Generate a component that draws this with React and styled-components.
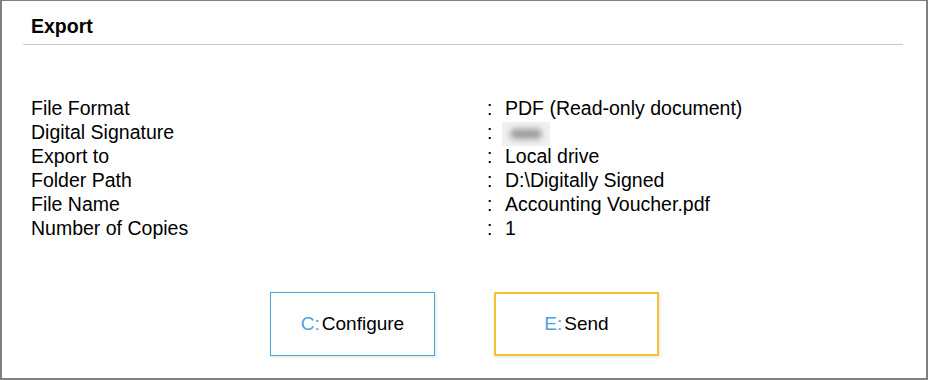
import React from "react";
import styled, { createGlobalStyle } from "styled-components";

const Global = createGlobalStyle`
  html, body {
    margin: 0;
    padding: 0;
    background: #ffffff;
  }
  * {
    box-sizing: border-box;
  }
`;

const Panel = styled.div`
  width: 928px;
  height: 380px;
  background: #ffffff;
  border: 2px solid #808080;
  border-top-width: 1px;
  font-family: "Liberation Sans", Arial, sans-serif;
  color: #000;
  display: flex;
  flex-direction: column;
`;

const Header = styled.div`
  margin: 0 23px 0 21px;
  height: 44px;
  padding: 14px 0 0 8px;
  border-bottom: 1px solid #c8c8c8;
  font-size: 19.5px;
  font-weight: bold;
`;

const Fields = styled.div`
  padding: 51px 0 0 29px;
  display: flex;
  flex-direction: column;
`;

const Row = styled.div`
  display: grid;
  grid-template-columns: 456px 18px 1fr;
  height: 24px;
  line-height: 24px;
  font-size: 19.5px;
`;

const Colon = styled.span``;

const Blurred = styled.span`
  display: inline-block;
  vertical-align: middle;
  width: 48px;
  height: 24px;
  margin-left: -3px;
  background: #f1f1f1;
  position: relative;
  &::after {
    content: "";
    position: absolute;
    left: 8px;
    top: 7px;
    width: 32px;
    height: 10px;
    border-radius: 5px;
    background: #999999;
    filter: blur(3px);
  }
`;

const Actions = styled.div`
  display: flex;
  gap: 59px;
  padding: 52px 0 0 268px;
`;

const Button = styled.div`
  width: 165px;
  height: 64px;
  display: flex;
  align-items: center;
  justify-content: center;
  border: ${(p) => (p.$primary ? "2px solid #f6c033" : "1px solid #4aa3df")};
  box-shadow: 1px 1px 3px rgba(0, 0, 0, 0.12);
  font-size: 19px;
  background: #fff;
  > span {
    color: #4aa3df;
    margin-right: 2px;
  }
`;

const rows = [
  ["File Format", "PDF (Read-only document)"],
  ["Digital Signature", null],
  ["Export to", "Local drive"],
  ["Folder Path", "D:\\Digitally Signed"],
  ["File Name", "Accounting Voucher.pdf"],
  ["Number of Copies", "1"],
];

export default function App() {
  return (
    <>
      <Global />
      <Panel>
        <Header>Export</Header>
        <Fields>
          {rows.map(([label, value]) => (
            <Row key={label}>
              <span>{label}</span>
              <Colon>:</Colon>
              <span>{value === null ? <Blurred /> : value}</span>
            </Row>
          ))}
        </Fields>
        <Actions>
          <Button>
            <span>C:</span>Configure
          </Button>
          <Button $primary>
            <span>E:</span>Send
          </Button>
        </Actions>
      </Panel>
    </>
  );
}
